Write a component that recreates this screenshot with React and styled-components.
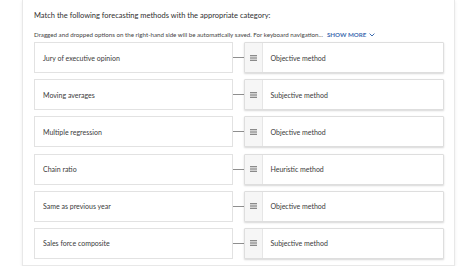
import styled, { createGlobalStyle } from 'styled-components';

const GlobalStyle = createGlobalStyle`
  html, body { margin: 0; padding: 0; background: #fff; }
  body { font-family: Lato, "Open Sans", sans-serif; color: #333; }
`;

const Card = styled.section`
  box-sizing: border-box;
  margin-left: 22px;
  width: 433px;
  padding: 10px 10px 6px 11px;
  border: 1px solid #e8e8e8;
  border-top: none;
  box-shadow: 0 1px 3px rgba(0, 0, 0, 0.08);
`;

const Title = styled.h2`
  margin: 0;
  font-size: 7.5px;
  font-weight: 400;
  line-height: 12px;
  color: #2f2f2f;
`;

const Hint = styled.p`
  margin: 8px 0 0 0;
  font-size: 6.2px;
  line-height: 9px;
  color: #444;
  display: flex;
  align-items: center;
  gap: 4px;
`;

const ShowMore = styled.span`
  color: #3f6db0;
  font-weight: 700;
  display: inline-flex;
  align-items: center;
  gap: 3px;
`;

const List = styled.div`
  margin-top: 3px;
  display: flex;
  flex-direction: column;
  gap: 6.2px;
`;

const Row = styled.div`
  display: flex;
  align-items: center;
  height: 31px;
`;

const Prompt = styled.div`
  box-sizing: border-box;
  width: 199px;
  height: 100%;
  border: 1px solid #e2e2e2;
  display: flex;
  align-items: center;
  padding-left: 8px;
  font-size: 7px;
  color: #3a3a3a;
`;

const Connector = styled.div`
  width: 11px;
  height: 1px;
  background: #8f8f8f;
`;

const Answer = styled.div`
  box-sizing: border-box;
  width: 201px;
  height: 100%;
  border: 1px solid #dedede;
  border-radius: 1px;
  box-shadow: 0 1px 2px rgba(0, 0, 0, 0.16);
  display: flex;
  align-items: stretch;
  background: #fff;
`;

const Handle = styled.div`
  width: 17px;
  background: #f6f6f6;
  border-right: 1px solid #e6e6e6;
  display: flex;
  align-items: center;
  justify-content: center;
`;

const AnswerText = styled.div`
  display: flex;
  align-items: center;
  padding-left: 8px;
  font-size: 7px;
  color: #3a3a3a;
`;

const Bars = () => (
  <svg width="7" height="6" viewBox="0 0 14 12">
    <path d="M0 1.5H14M0 6H14M0 10.5H14" stroke="#444" strokeWidth="1.6" fill="none" />
  </svg>
);

const Chevron = () => (
  <svg width="6" height="4" viewBox="0 0 6 4">
    <path d="M0.6 0.6 L3 3 L5.4 0.6" fill="none" stroke="#3f6db0" strokeWidth="1" />
  </svg>
);

const pairs = [
  ['Jury of executive opinion', 'Objective method'],
  ['Moving averages', 'Subjective method'],
  ['Multiple regression', 'Objective method'],
  ['Chain ratio', 'Heuristic method'],
  ['Same as previous year', 'Objective method'],
  ['Sales force composite', 'Subjective method'],
];

export default function App() {
  return (
    <>
      <GlobalStyle />
      <Card>
        <Title>Match the following forecasting methods with the appropriate category:</Title>
        <Hint>
          <span>Dragged and dropped options on the right-hand side will be automatically saved. For keyboard navigation...</span>
          <ShowMore>SHOW MORE <Chevron /></ShowMore>
        </Hint>
        <List>
          {pairs.map(([left, right]) => (
            <Row key={left}>
              <Prompt>{left}</Prompt>
              <Connector />
              <Answer>
                <Handle><Bars /></Handle>
                <AnswerText>{right}</AnswerText>
              </Answer>
            </Row>
          ))}
        </List>
      </Card>
    </>
  );
}
